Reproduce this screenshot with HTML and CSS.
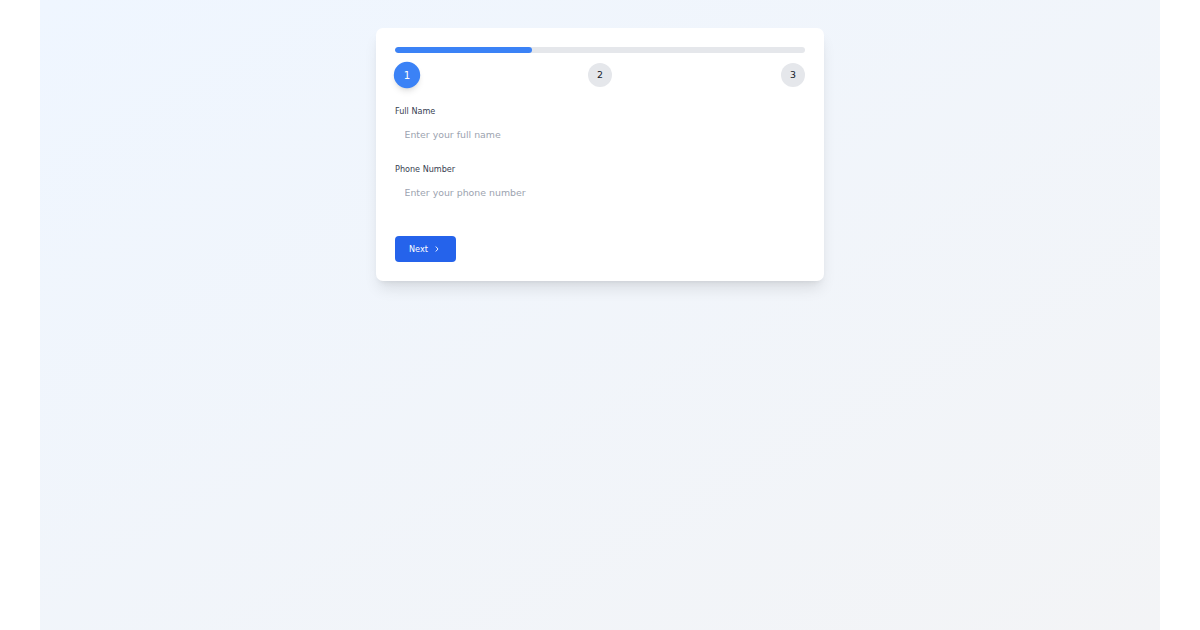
FILE: index.html
```html
<!DOCTYPE html>
<html lang="en">
<head>
<meta charset="utf-8">
<title>Multi-step form</title>
<link rel="stylesheet" href="styles.css">
</head>
<body>
<div class="page">
  <form class="card">
    <div class="progress"><div class="progress-fill" style="width:33.33%"></div></div>
    <div class="steps">
      <span class="step active">1</span>
      <span class="step">2</span>
      <span class="step">3</span>
    </div>
    <div class="field">
      <label class="label" for="name">Full Name</label>
      <input class="input" id="name" type="text" placeholder="Enter your full name">
    </div>
    <div class="field">
      <label class="label" for="phone">Phone Number</label>
      <input class="input" id="phone" type="tel" placeholder="Enter your phone number">
    </div>
    <div class="actions">
      <button class="btn" type="button">Next
        <svg class="chev" viewBox="0 0 4 6" width="4" height="6"><path d="M1 0.8 L3 3 L1 5.2" fill="none" stroke="currentColor" stroke-width="0.9" stroke-linecap="round" stroke-linejoin="round"/></svg>
      </button>
    </div>
  </form>
</div>
</body>
</html>
```
FILE: styles.css
```css
* { box-sizing: border-box; }
html, body { margin: 0; padding: 0; }
body {
  background: #ffffff;
  font-family: "DejaVu Sans", "Noto Sans", sans-serif;
}
.page {
  width: 1120px;
  min-height: 630px;
  margin: 0 auto;
  padding-top: 28px;
  background: linear-gradient(to bottom right, #eff6ff, #f3f4f6);
}
.card {
  width: 448px;
  margin: 0 auto;
  background: #ffffff;
  border-radius: 7px;
  padding: 19px 19px 19px 19px;
  box-shadow: 0 10px 15px -3px rgba(0,0,0,0.1), 0 4px 6px -4px rgba(0,0,0,0.1);
}
.progress {
  height: 6px;
  background: #e5e7eb;
  border-radius: 3px;
  overflow: hidden;
}
.progress-fill {
  height: 100%;
  background: #3b82f6;
  border-radius: 3px;
}
.steps {
  display: flex;
  justify-content: space-between;
  margin-top: 9.5px;
}
.step {
  width: 24px;
  height: 24px;
  border-radius: 50%;
  background: #e5e7eb;
  color: #111827;
  font-size: 9.4px;
  display: flex;
  align-items: center;
  justify-content: center;
}
.step.active {
  background: #3b82f6;
  color: #ffffff;
  transform: scale(1.1);
  box-shadow: 0 4px 6px -1px rgba(0,0,0,0.1), 0 2px 4px -2px rgba(0,0,0,0.1);
}
.field {
  display: flex;
  flex-direction: column;
  margin-top: 18.5px;
}
.field + .field { margin-top: 13px; }
.label {
  font-size: 8.1px;
  line-height: 12px;
  color: #374151;
  margin-bottom: 1px;
}
.input {
  height: 32px;
  border: none;
  outline: none;
  padding: 0 9.5px;
  font-family: inherit;
  font-size: 9.4px;
  color: #111827;
  background: transparent;
}
.input::placeholder { color: #9ca3af; }
.actions {
  margin-top: 28px;
  display: flex;
}
.btn {
  height: 26px;
  padding: 0 17px 0 14px;
  display: flex;
  align-items: center;
  gap: 7px;
  background: #2563eb;
  color: #ffffff;
  border: none;
  border-radius: 4px;
  font-family: inherit;
  font-size: 8.1px;
}
.chev { display: block; }
```
